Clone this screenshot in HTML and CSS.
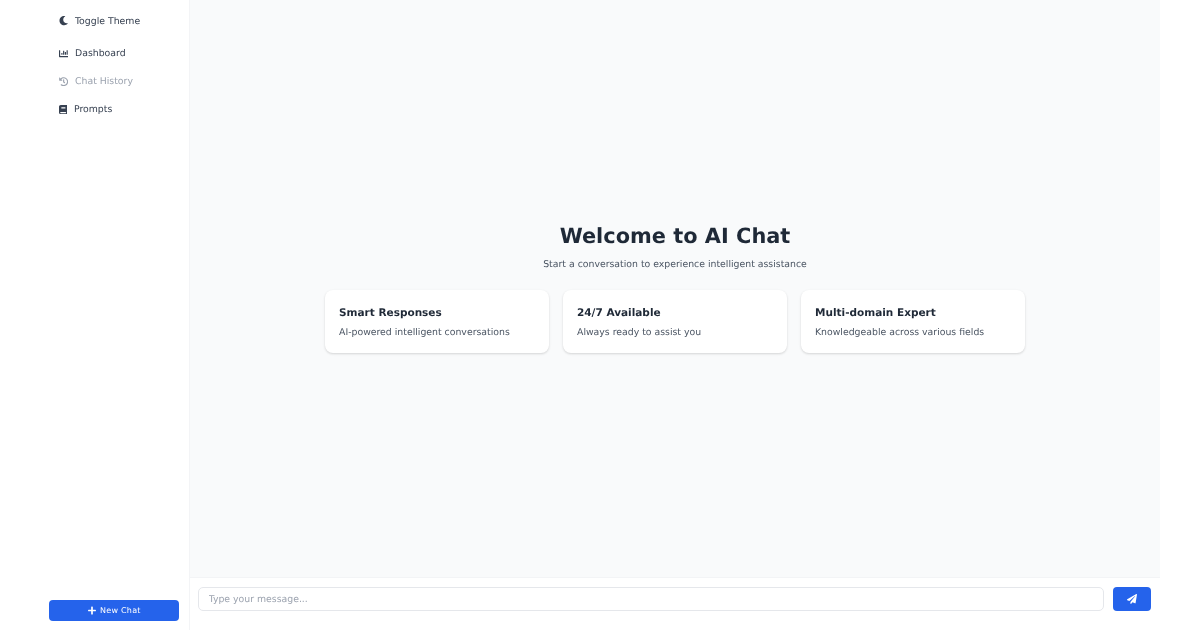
FILE: index.html
```html
<!DOCTYPE html>
<html lang="en">
<head>
    <meta charset="UTF-8">
    <meta name="viewport" content="width=device-width, initial-scale=1.0">
    <title>AI Chat</title>
    <link rel="stylesheet" href="styles.css">
</head>
<body>
    <div class="app">
        <div class="sidebar">
            <div class="nav">
                <a href="#" class="nav-item theme-toggle">
                    <svg class="icon" viewBox="0 0 512 512"><path d="M283.211 512c78.962 0 151.079-35.925 198.857-94.792 7.068-8.708-.639-21.43-11.562-19.35-124.203 23.654-238.262-71.576-238.262-196.954 0-72.222 38.662-138.635 101.498-174.394 9.686-5.512 7.25-20.197-3.756-22.23A258.156 258.156 0 0 0 283.211 0c-141.309 0-256 114.511-256 256 0 141.309 114.511 256 256 256z"/></svg>
                    Toggle Theme
                </a>
                <a href="#" class="nav-item">
                    <svg class="icon" viewBox="0 0 512 512"><path d="M332.8 320h38.4c6.4 0 12.8-6.4 12.8-12.8V172.8c0-6.4-6.4-12.8-12.8-12.8h-38.4c-6.4 0-12.8 6.4-12.8 12.8v134.4c0 6.4 6.4 12.8 12.8 12.8zm96 0h38.4c6.4 0 12.8-6.4 12.8-12.8V76.8c0-6.4-6.4-12.8-12.8-12.8h-38.4c-6.4 0-12.8 6.4-12.8 12.8v230.4c0 6.4 6.4 12.8 12.8 12.8zm-288 0h38.4c6.4 0 12.8-6.4 12.8-12.8v-70.4c0-6.4-6.4-12.8-12.8-12.8h-38.4c-6.4 0-12.8 6.4-12.8 12.8v70.4c0 6.4 6.4 12.8 12.8 12.8zm96 0h38.4c6.4 0 12.8-6.4 12.8-12.8V108.8c0-6.4-6.4-12.8-12.8-12.8h-38.4c-6.4 0-12.8 6.4-12.8 12.8v198.4c0 6.4 6.4 12.8 12.8 12.8zM496 384H64V80c0-8.84-7.16-16-16-16H16C7.16 64 0 71.16 0 80v336c0 17.67 14.33 32 32 32h464c8.84 0 16-7.16 16-16v-32c0-8.84-7.16-16-16-16z"/></svg>
                    Dashboard
                </a>
                <a href="#" class="nav-item disabled">
                    <svg class="icon" viewBox="0 0 512 512"><path d="M504 255.531c.253 136.64-111.18 248.372-247.82 248.468-59.015.042-113.223-20.53-155.822-54.911-11.077-8.94-11.905-25.541-1.839-35.607l11.267-11.267c8.609-8.609 22.353-9.551 31.891-1.984C173.062 425.135 212.781 440 256 440c101.705 0 184-82.311 184-184 0-101.705-82.311-184-184-184-48.814 0-93.149 18.969-126.068 49.932l50.754 50.754c10.08 10.08 2.941 27.314-11.313 27.314H24c-8.837 0-16-7.163-16-16V38.627c0-14.254 17.234-21.393 27.314-11.314l49.372 49.372C129.209 34.136 189.552 8 256 8c136.81 0 247.747 110.78 248 247.531zm-180.912 78.784l9.823-12.63c8.138-10.463 6.253-25.542-4.21-33.679L288 256.349V152c0-13.255-10.745-24-24-24h-16c-13.255 0-24 10.745-24 24v135.651l65.409 50.874c10.463 8.137 25.541 6.253 33.679-4.21z"/></svg>
                    Chat History
                </a>
                <a href="#" class="nav-item prompts">
                    <svg class="icon icon-book" viewBox="0 0 448 512"><path d="M448 360V24c0-13.3-10.7-24-24-24H96C43 0 0 43 0 96v320c0 53 43 96 96 96h328c13.3 0 24-10.7 24-24v-16c0-7.5-3.5-14.3-8.9-18.7-4.2-15.4-4.2-59.3 0-74.7 5.4-4.3 8.9-11.1 8.9-18.6zM128 134c0-3.3 2.7-6 6-6h212c3.3 0 6 2.7 6 6v20c0 3.3-2.7 6-6 6H134c-3.3 0-6-2.7-6-6v-20zm0 64c0-3.3 2.7-6 6-6h212c3.3 0 6 2.7 6 6v20c0 3.3-2.7 6-6 6H134c-3.3 0-6-2.7-6-6v-20zm253.4 250H96c-17.7 0-32-14.3-32-32 0-17.6 14.4-32 32-32h285.4c-1.9 17.1-1.9 46.9 0 64z"/></svg>
                    Prompts
                </a>
            </div>
            <button class="new-chat">
                <svg class="icon-plus" viewBox="0 0 448 512"><path d="M416 208H272V64c0-17.67-14.33-32-32-32h-32c-17.67 0-32 14.33-32 32v144H32c-17.67 0-32 14.33-32 32v32c0 17.67 14.33 32 32 32h144v144c0 17.67 14.33 32 32 32h32c17.67 0 32-14.33 32-32V304h144c17.67 0 32-14.33 32-32v-32c0-17.67-14.33-32-32-32z"/></svg>
                New Chat
            </button>
        </div>

        <div class="main">
            <div class="messages">
                <h1>Welcome to AI Chat</h1>
                <p class="subtitle">Start a conversation to experience intelligent assistance</p>
                <div class="cards">
                    <div class="card">
                        <h3>Smart Responses</h3>
                        <p>AI-powered intelligent conversations</p>
                    </div>
                    <div class="card">
                        <h3>24/7 Available</h3>
                        <p>Always ready to assist you</p>
                    </div>
                    <div class="card">
                        <h3>Multi-domain Expert</h3>
                        <p>Knowledgeable across various fields</p>
                    </div>
                </div>
            </div>
            <div class="input-bar">
                <input type="text" class="message-input" placeholder="Type your message...">
                <button class="send-button">
                    <svg class="icon-send" viewBox="0 0 512 512"><path d="M476 3.2L12.5 270.6c-18.1 10.4-15.8 35.6 2.2 43.2L121 358.4l287.3-253.2c5.5-4.9 13.3 2.6 8.6 8.3L176 407v80.5c0 23.6 28.5 32.9 42.5 15.8L282 426l124.6 52.2c14.2 6 30.4-2.9 33-18.2l72-432C515 7.8 493.3-6.8 476 3.2z"/></svg>
                </button>
            </div>
        </div>
    </div>
</body>
</html>
```
FILE: styles.css
```css
* {
    box-sizing: border-box;
}
body {
    font-family: 'DejaVu Sans', sans-serif;
    text-rendering: geometricPrecision;
    background-color: white;
    color: #1f2937;
    margin: 0;
    padding: 0;
}
.app {
    display: flex;
    width: 1160px;
    height: 630px;
    will-change: transform;
}
.sidebar {
    width: 190px;
    flex-shrink: 0;
    display: flex;
    flex-direction: column;
    justify-content: space-between;
    padding: 0 9.67px 9.33px 49.33px;
    border-right: 1px solid #f3f4f6;
}
.nav {
    display: flex;
    flex-direction: column;
}
.nav-item {
    display: flex;
    align-items: center;
    height: 28px;
    padding-left: 9.33px;
    font-size: 9.33px;
    color: #374151;
    text-decoration: none;
}
.theme-toggle {
    height: 42px;
    margin-bottom: -2.5px;
}
.disabled {
    color: #9ca3af;
}
.icon {
    width: 9.33px;
    height: 9.33px;
    margin-right: 7px;
    fill: currentColor;
}
.icon-book {
    width: 8.17px;
    margin-right: 7.17px;
}
.new-chat {
    display: flex;
    align-items: center;
    justify-content: center;
    width: 130px;
    height: 21px;
    background-color: #2563eb;
    color: white;
    border: 0;
    border-radius: 4px;
    font-family: inherit;
    text-rendering: inherit;
    font-size: 8px;
    letter-spacing: 0.25px;
}
.icon-plus {
    width: 8px;
    height: 9px;
    margin-right: 4px;
    fill: white;
}
.main {
    flex: 1;
    display: flex;
    flex-direction: column;
    min-width: 0;
}
.messages {
    flex: 1;
    display: flex;
    flex-direction: column;
    align-items: center;
    justify-content: center;
    background-color: #f9fafb;
    padding-bottom: 2.5px;
}
h1 {
    margin: 0 0 8.5px;
    font-size: 20.9px;
    line-height: 28px;
    color: #1f2937;
}
.subtitle {
    margin: 0 0 18px;
    font-size: 9.33px;
    line-height: 14px;
    color: #4b5563;
}
.cards {
    display: flex;
    gap: 14px;
}
.card {
    width: 224px;
    height: 63px;
    padding: 15px 14px 14px;
    background-color: white;
    border-radius: 8px;
    box-shadow: 0 1px 3px rgba(0, 0, 0, 0.1), 0 1px 2px rgba(0, 0, 0, 0.06);
}
.card h3 {
    margin: 0 0 5px;
    font-size: 10.5px;
    line-height: 16px;
    color: #1f2937;
}
.card p {
    margin: 0;
    font-size: 9.33px;
    line-height: 14px;
    color: #4b5563;
}
.input-bar {
    display: flex;
    gap: 9.33px;
    height: 53px;
    padding: 9px 9.33px 18.67px 8.33px;
    border-top: 1px solid #f3f4f6;
}
.message-input {
    flex: 1;
    height: 24.33px;
    padding: 0 9.33px;
    border: 1px solid #e5e7eb;
    border-radius: 5px;
    font-family: inherit;
    text-rendering: inherit;
    font-size: 9.33px;
}
.message-input::placeholder {
    color: #9ca3af;
}
.send-button {
    display: flex;
    align-items: center;
    justify-content: center;
    width: 37.33px;
    height: 24.33px;
    background-color: #2563eb;
    border: 0;
    border-radius: 4px;
}
.icon-send {
    width: 10px;
    height: 10px;
    fill: white;
}
```
